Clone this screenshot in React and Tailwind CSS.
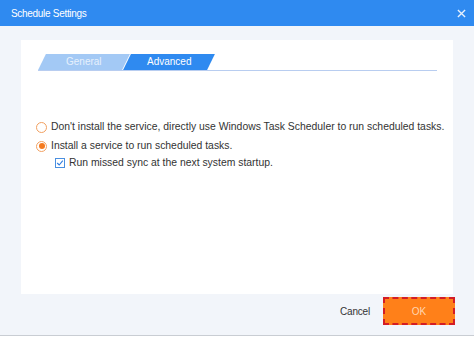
import React from 'react';

const font = { fontFamily: '"Liberation Sans", Arial, sans-serif' };

// Parallelogram tab
const Tab = ({ label, active, className = '' }) => (
  <div
    className={`h-[16px] w-[84px] -skew-x-[26deg] flex items-center justify-center ${
      active ? 'bg-[#2f8af0] text-white' : 'bg-[#a3c9f5] text-[#e6f0fc]'
    } ${className}`}
  >
    <span className="skew-x-[26deg] text-[10px] leading-none">{label}</span>
  </div>
);

const Radio = ({ checked }) => (
  <span className="w-[11px] h-[11px] rounded-full border border-[#f2a060] bg-white flex items-center justify-center shrink-0">
    {checked && <span className="w-[6px] h-[6px] rounded-full bg-[#f47a1f]" />}
  </span>
);

const Checkbox = () => (
  <span className="w-[10px] h-[10px] border border-[#4a8fe0] bg-white flex items-center justify-center shrink-0">
    <svg viewBox="0 0 10 10" className="w-[8px] h-[8px]">
      <path d="M1.5 5 L4 7.5 L8.5 2" fill="none" stroke="#2f7de0" strokeWidth="1.4" />
    </svg>
  </span>
);

export default function App() {
  return (
    <div className="w-[474px] h-[338px] bg-white flex flex-col overflow-hidden" style={font}>
      {/* Title bar */}
      <div className="h-[26px] bg-[#2f8af0] flex items-center justify-between pl-[11px] pr-[8px] shrink-0">
        <span className="text-white text-[10px] tracking-[-0.3px]">Schedule Settings</span>
        <svg viewBox="0 0 10 10" className="w-[9px] h-[9px]">
          <path d="M1 1 L9 9 M9 1 L1 9" stroke="#e8f1fd" strokeWidth="1.5" />
        </svg>
      </div>

      {/* Body */}
      <div className="h-[310px] bg-[#f2f5fa] border-b border-[#c9cdd3] flex flex-col px-[21px] pt-[14px]">
        <div className="h-[254px] bg-white pt-[14px] pl-[17px] pr-[16px]">
          {/* Tabs */}
          <div className="flex border-b border-[#b8cdf0] pl-[4px]">
            <Tab label="General" />
            <Tab label="Advanced" active className="ml-[1px]" />
          </div>

          {/* Options */}
          <div className="mt-[50px] text-[10.4px] text-[#333] flex flex-col whitespace-nowrap">
            <div className="flex items-center gap-[4px] h-[12px] -ml-[2px]">
              <Radio />
              <span>Don't install the service, directly use Windows Task Scheduler to run scheduled tasks.</span>
            </div>
            <div className="flex items-center gap-[4px] h-[12px] -ml-[2px] mt-[7px]">
              <Radio checked />
              <span>Install a service to run scheduled tasks.</span>
            </div>
            <div className="flex items-center gap-[4px] h-[12px] ml-[17px] mt-[5px]">
              <Checkbox />
              <span>Run missed sync at the next system startup.</span>
            </div>
          </div>
        </div>

        {/* Footer */}
        <div className="flex items-center justify-end mt-[3px] -mr-[2px]">
          <span className="text-[10px] tracking-[-0.2px] text-[#333] mr-[13px]">Cancel</span>
          <div className="w-[72px] h-[28px] bg-[#ff8019] border-2 border-dashed border-[#d41c24] flex items-center justify-center">
            <span className="text-[10px] text-[#ffd6b0]">OK</span>
          </div>
        </div>
      </div>
    </div>
  );
}
